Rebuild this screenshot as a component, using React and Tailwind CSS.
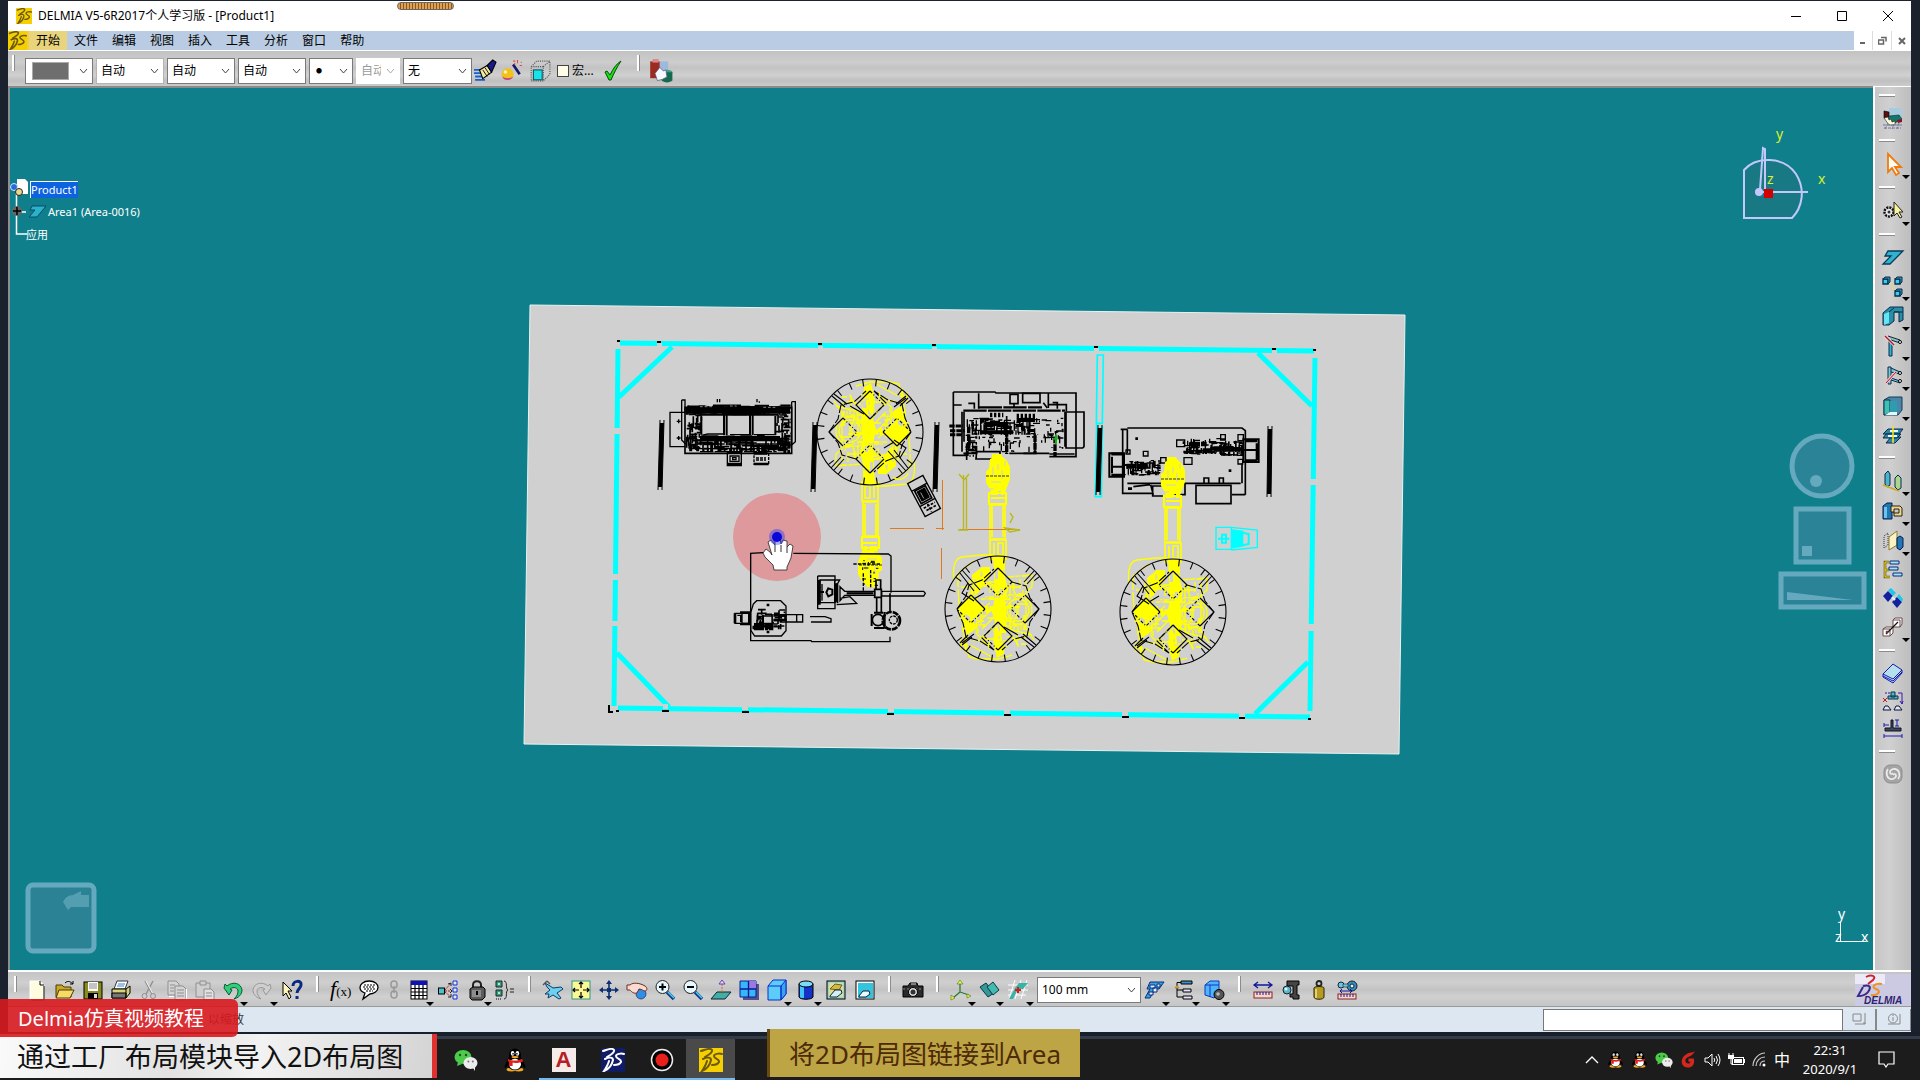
import { useState } from "react";
import clsx from "clsx";

const MENUS = ["开始", "文件", "编辑", "视图", "插入", "工具", "分析", "窗口", "帮助"];

/* ---------- logos ---------- */

function DsMark({ size, bg, ink, width = 2 }) {
    return (
        <svg width={size} height={size} viewBox="0 0 24 24" aria-hidden="true" className="shrink-0">
            <rect width="24" height="24" fill={bg} />
            <g fill="none" stroke={ink} strokeWidth={width} strokeLinecap="round">
                <path d="M2 3C6 2 11-1 13 2c1 3-4 5-7 7" />
                <path d="M4 11c4-2 8-2 8 1c-1 5-4 9-9 11c2-3 4-6 5-10" />
                <path d="M23 6c-3-1-8 0-8 2c0 3 6 3 5 6c-1 2-4 3-7 3" />
            </g>
        </svg>
    );
}

function Penguin({ size }) {
    return (
        <svg width={size} height={size} viewBox="0 0 20 20" aria-hidden="true">
            <ellipse cx="7" cy="18" rx="4" ry="1.6" fill="#f5a623" />
            <ellipse cx="13" cy="18" rx="4" ry="1.6" fill="#f5a623" />
            <path d="M3 13C1 16 2 17 3 15ZM17 13c2 3 1 4 0 2Z" fill="#000" stroke="#000" />
            <ellipse cx="10" cy="12" rx="7" ry="6.5" fill="#000" />
            <ellipse cx="10" cy="6" rx="5" ry="5.5" fill="#000" />
            <ellipse cx="10" cy="13.5" rx="5" ry="4.5" fill="#fff" />
            <ellipse cx="8" cy="4.5" rx="1.5" ry="2" fill="#fff" />
            <ellipse cx="12" cy="4.5" rx="1.5" ry="2" fill="#fff" />
            <circle cx="8.4" cy="4.8" r="0.7" />
            <circle cx="11.6" cy="4.8" r="0.7" />
            <ellipse cx="10" cy="7.6" rx="3" ry="1" fill="#f5a623" />
            <path d="M4 9c4 2 8 2 12 0l1 2c-4 2-9 2-13 0Z" fill="#e02020" />
            <path d="M5 11h3v4H5Z" fill="#e02020" />
        </svg>
    );
}

function WeChat({ size }) {
    return (
        <svg width={size} height={size} viewBox="0 0 24 24" aria-hidden="true">
            <ellipse cx="9" cy="9" rx="8.5" ry="7" fill="#4ccb4a" />
            <path d="M4 14l-1 4l5-2Z" fill="#4ccb4a" />
            <ellipse cx="16.5" cy="15" rx="7" ry="6" fill="#ececec" />
            <path d="M19 20l2 3v-5Z" fill="#ececec" />
            <circle cx="6" cy="7" r="1.2" fill="#1f4d20" />
            <circle cx="12" cy="7" r="1.2" fill="#1f4d20" />
            <circle cx="14.4" cy="13.4" r="1" fill="#777" />
            <circle cx="18.8" cy="13.4" r="1" fill="#777" />
        </svg>
    );
}

/* ---------- toolbar icons, all on a 20 x 20 grid ---------- */

const ICONS = {
    brush: (
        <>
            <path d="M0 9h9M0 12h10M1 15h9M1 18h9" stroke="#1560d0" strokeWidth="1.6" />
            <path d="M5 9l7-4l4 6l-8 6Z" fill="#f3e8a0" stroke="#000" />
            <path d="M8 9l4 6M10 7l4 6" stroke="#000" strokeWidth="0.8" />
            <path d="M12 5l5-5l3 2l-4 9Z" fill="#1a1a90" stroke="#000" />
        </>
    ),
    wand: (
        <>
            <circle cx="6" cy="13" r="5.5" fill="#f2c21a" />
            <path d="M1 15a5.500 5.500 0 0 0 10 0c-3 2-7 2-10 0Z" fill="#c0409a" />
            <circle cx="4" cy="11" r="1.6" fill="#fff6b0" />
            <path d="M11 4l6 9" stroke="#15156a" strokeWidth="2.4" />
            <path d="M11 1h2M15 0v3M18 2h1M17 5h2M12 3l1 1" stroke="#e0483a" />
        </>
    ),
    wirebox: (
        <>
            <path d="M2 6h11v13H2ZM2 6l5-5h12v12l-6 6M13 6l6-5" fill="none" stroke="#555" strokeDasharray="1 1" />
            <rect x="4" y="9" width="8" height="9" fill="#17e3e8" stroke="#156" />
        </>
    ),
    check: <path d="M2 11l2-1l3 4C10 8 13 3 18 0C14 6 11 12 8 19H6Z" fill="#15e015" stroke="#064d06" />,
    catalog: (
        <>
            <path d="M1 2h8v14H1Z" fill="#9c2b20" />
            <path d="M3 0h5v3H3Z" fill="#d88" />
            <path d="M9 2h7v7H9Z" fill="#9fb8dd" />
            <ellipse cx="15" cy="11" rx="4.500" ry="2" fill="#39a08a" />
            <path d="M10.500 11v7c2 2 7 2 9 0v-7Z" fill="#15694f" />
            <path d="M5 12l4-5l3 3l2-1l1 6l-4 2l-4 1Z" fill="#f4f8ff" stroke="#557" strokeWidth="0.6" />
        </>
    ),
    newFile: (
        <>
            <path d="M3 1h10l4 4v15H3Z" fill="#fffde0" stroke="#fff" />
            <path d="M17 6v14H4" fill="none" stroke="#000" />
            <path d="M13 1v4h4" fill="#fff" stroke="#000" />
        </>
    ),
    open: (
        <>
            <path d="M1 5h6l2 2h7v10H1Z" fill="#c9a72c" stroke="#4c3c00" />
            <path d="M4 10h15l-4 8H1Z" fill="#f5dc66" stroke="#4c3c00" />
            <path d="M10 3c3-3 6-1 8 1M18 1v3h-3" fill="none" stroke="#000" />
        </>
    ),
    save: (
        <>
            <rect x="1" y="2" width="18" height="17" fill="#8a8a20" stroke="#000" />
            <rect x="5" y="2" width="10" height="9" fill="#fff" />
            <path d="M6 4h8M6 6h8M6 8h8" stroke="#888" />
            <rect x="5" y="13" width="10" height="6" fill="#000" />
            <rect x="11" y="14" width="3" height="4" fill="#ddd" />
        </>
    ),
    print: (
        <>
            <path d="M6 1h11l-3 8H3Z" fill="#fff" stroke="#334" />
            <path d="M7 4h7M6 6h7" stroke="#38c" />
            <path d="M1 9h14l4-3v7l-4 5H1Z" fill="#d8d27a" stroke="#000" />
            <path d="M1 13h14v5H1ZM15 9v9" fill="#777" stroke="#000" />
        </>
    ),
    cut: (
        <>
            <path d="M6 1l7 13M14 1L7 14" stroke="#8f8f8f" strokeWidth="1.4" />
            <path d="M7 1l7 13" stroke="#f4f4f4" />
            <circle cx="5.500" cy="16" r="2.500" fill="none" stroke="#8f8f8f" />
            <circle cx="14" cy="16" r="2.500" fill="none" stroke="#8f8f8f" />
        </>
    ),
    copy: (
        <g fill="#d4d4d4" stroke="#8f8f8f">
            <path d="M1 1h8l3 3v11H1Z" />
            <path d="M8 6h8l3 3v11H8Z" />
            <path d="M3 5h5M3 8h4M3 11h4M10 10h7M10 13h7M10 16h7" />
            <path d="M19.500 9v11M2 16.500h5" stroke="#fff" />
        </g>
    ),
    paste: (
        <g fill="#cfcfcf" stroke="#8f8f8f">
            <path d="M1 3h14v14H1Z" />
            <path d="M5 1h6v4H5Z" />
            <path d="M9 9h7l3 3v8H9Z" fill="#e0e0e0" />
            <path d="M11 13h6M11 16h6" />
        </g>
    ),
    undo: (
        <path d="M1 8l5 7l3-5l-2-1c4-3 8-1 8 2c0 3-1 5-4 8c7-2 8-7 8-9c-1-7-9-9-15-4L2 4Z" fill="#2fd07a" stroke="#0b5a30" />
    ),
    redo: (
        <path d="M19 8l-5 7l-3-5l2-1c-4-3-8-1-8 2c0 3 1 5 4 8c-7-2-8-7-8-9c1-7 9-9 15-4l2-2Z" fill="#cfcfcf" stroke="#999" />
    ),
    help: (
        <>
            <path d="M1 2l9 9l-4 0l3 6l-2 2l-3-6l-3 3Z" fill="#fbf6b8" stroke="#000" />
            <path d="M11 6c0-6 9-6 8-1c0 3-4 4-4 8M15 16v3" fill="none" stroke="#0a2a80" strokeWidth="3" />
        </>
    ),
    formula: (
        <text x="-1" y="16" fontFamily="Liberation Serif, serif" fontStyle="italic" fontSize="22">
            f<tspan fontSize="13" fontStyle="normal">(x)</tspan>
        </text>
    ),
    comment: (
        <>
            <path d="M10 1c6 0 9 3 9 6.500s-4 6.500-8 6.500l-7 5l2-6C3 12 1 10 1 7.500S4 1 10 1Z" fill="#fff" stroke="#000" strokeWidth="1.3" />
            <path d="M5 5h11M4 7h12M5 9h11M7 11h7" stroke="#000" strokeDasharray="2 1" />
        </>
    ),
    chain: (
        <g fill="none" stroke="#999" strokeWidth="1.500">
            <rect x="7" y="1" width="6" height="7" rx="3" />
            <rect x="7" y="11" width="6" height="7" rx="3" />
            <path d="M10 6v7" />
        </g>
    ),
    table: (
        <>
            <rect x="2" y="1" width="16" height="18" fill="#fff" stroke="#000" />
            <rect x="2" y="1" width="16" height="4" fill="#0c12c0" />
            <path d="M2 8.500h16M2 12h16M2 15.500h16M6 5v14M10 5v14M14 5v14" stroke="#000" strokeWidth="1.2" />
        </>
    ),
    tree: (
        <>
            <rect x="0.500" y="8" width="6" height="6" fill="#4ac0d0" stroke="#000" />
            <path d="M7 10l6-7M7 11h7M7 12l6 5" stroke="#b02020" strokeDasharray="2 1" />
            <path d="M10 4l3-1l0 3M12 9l2 2l-2 2M10 17h3v-3" fill="none" stroke="#222" />
            <path d="M15 1h4v4h-4ZM15 8h4v4h-4ZM15 15h4v4h-4Z" fill="#dfe8ff" stroke="#1430d0" />
        </>
    ),
    lock: (
        <>
            <path d="M6 9V5c0-5 8-5 8 0v4" fill="none" stroke="#222" strokeWidth="2" />
            <path d="M3 9l3-2h10l2 2v8l-3 3H5l-2-2Z" fill="#5c5c5c" stroke="#000" />
            <path d="M5 10h9v7H5Z" fill="#8d8d8d" />
            <path d="M10 11v4" stroke="#000" strokeWidth="2" />
        </>
    ),
    brace: (
        <>
            <path d="M1 1h6v6H1ZM1 10h6v6H1Z" fill="#2aa088" stroke="#222" />
            <path d="M3 3h2v2H3ZM3 12h2v2H3Z" fill="#c8e8a0" />
            <path d="M1 19h6" stroke="#000" strokeDasharray="1 1" />
            <path d="M9 1c4 0 1 8 4 9c-3 1 0 9-4 9M15 9h4M15 12h4" fill="none" stroke="#222" />
        </>
    ),
    fly: (
        <>
            <path d="M2 3l5 3l3 2l8-1l2 2l-6 4l4 5l-2 1l-6-4l-5 3l1-4l-4 0l5-4l-3-3Z" fill="#6cd0f0" stroke="#123a66" />
            <path d="M0 5l4-4M4 1l3 3" stroke="#555" strokeWidth="1.4" />
        </>
    ),
    fit: (
        <>
            <rect x="1" y="1" width="18" height="18" fill="#fbf895" stroke="#2a9a8a" />
            <path d="M10 2v6M10 18v-6M2 10h6M18 10h-6M8 4l2-2l2 2M8 16l2 2l2-2M4 8l-2 2l2 2M16 8l2 2l-2 2" fill="none" stroke="#000" strokeWidth="1.2" />
        </>
    ),
    pan: (
        <>
            <path d="M10 3v14M3 10h14" stroke="#0c2f74" strokeWidth="1.6" />
            <path d="M10 0l3 4H7ZM10 20l3-4H7ZM0 10l4-3v6ZM20 10l-4-3v6Z" fill="#0c2f74" />
            <rect x="8" y="8" width="4" height="4" fill="#0c2f74" />
        </>
    ),
    rotate: (
        <>
            <circle cx="14" cy="14" r="5" fill="#2f8fe6" stroke="#114" strokeWidth="0.600" />
            <path d="M0 5h3c3-3 10-2 15 1c3 2 2 5 0 5s-3-2-6-2l-2 4c-4 1-6-2-7-3H0Z" fill="#f8dcd2" stroke="#702a20" />
        </>
    ),
    zoomIn: (
        <>
            <path d="M12 12l7 7" stroke="#123a8c" strokeWidth="3.500" />
            <path d="M13 12l6 6" stroke="#4ad0ea" strokeWidth="1.500" />
            <circle cx="7.500" cy="7" r="6.500" fill="#e4f8ff" stroke="#222" />
            <path d="M4 7h7M7.500 3.500v7" stroke="#000" strokeWidth="2" />
        </>
    ),
    zoomOut: (
        <>
            <path d="M12 12l7 7" stroke="#123a8c" strokeWidth="3.500" />
            <path d="M13 12l6 6" stroke="#4ad0ea" strokeWidth="1.500" />
            <circle cx="7.500" cy="7" r="6.500" fill="#e4f8ff" stroke="#222" />
            <path d="M4 7h7" stroke="#000" strokeWidth="2" />
        </>
    ),
    normal: (
        <>
            <path d="M6 12h14l-6 7H0Z" fill="#3fb0a8" stroke="#123" />
            <path d="M11 15V4" stroke="#c07a20" strokeDasharray="2 1" />
            <path d="M11 0l3 4H8Z" fill="#e6dcff" stroke="#6a3fb0" />
        </>
    ),
    quad: (
        <>
            <path d="M4 4h16v16H4Z" fill="#56508c" />
            <path d="M1 1h16v16H1Z" fill="#36b8f6" stroke="#0a1a9a" />
            <path d="M10 1h7v8h-7Z" fill="#9a7ae0" />
            <path d="M9.500 1v16M1 9h16" stroke="#0a1a9a" strokeWidth="1.400" />
        </>
    ),
    cube: (
        <>
            <path d="M1 6l5-6h13v14l-5 6H1Z" fill="#5cccfa" stroke="#0a2ad0" />
            <path d="M14 6l5-6v14l-5 6Z" fill="#38a4ea" stroke="#0a2ad0" />
            <path d="M1 6h13v14" fill="none" stroke="#0a2ad0" />
        </>
    ),
    cylinder: (
        <>
            <path d="M3 4v13c1 3 13 3 14 0V4Z" fill="#1431c8" stroke="#000" />
            <path d="M4 5h4v13H5l-1-1Z" fill="#42c3fa" />
            <ellipse cx="10" cy="4" rx="7" ry="3" fill="#7adcfa" stroke="#000" />
        </>
    ),
    hide: (
        <>
            <rect x="1" y="1" width="18" height="18" fill="#8fd8e0" stroke="#000" />
            <path d="M3 3h14v14H3Z" fill="#e7dc80" />
            <path d="M4 9l5-5l7 1l-3 5Z" fill="#d6b93a" stroke="#333" strokeWidth="0.700" />
            <path d="M4 16l5-6h6l1 3l-5 4H4Z" fill="#d2f0f8" stroke="#123" />
        </>
    ),
    swap: (
        <>
            <rect x="1" y="1" width="18" height="18" fill="#fff" stroke="#000" />
            <rect x="3" y="3" width="15" height="15" fill="#35c4e0" />
            <path d="M4 16l4-5h6l1 3l-4 3H4Z" fill="#e8faff" stroke="#123" />
        </>
    ),
    camera: (
        <>
            <path d="M0 6h5l2-3h7l1 3h5v11H0Z" fill="#2b2b2b" stroke="#000" />
            <path d="M0 9h20" stroke="#888" strokeDasharray="2 2" />
            <circle cx="10" cy="12" r="4.500" fill="#ddd" stroke="#000" />
            <circle cx="10" cy="12" r="2.500" fill="#333" />
            <path d="M8 4h5" stroke="#ddd" />
        </>
    ),
    axis: (
        <>
            <path d="M9 12V2M9 12l9 3M9 12l-7 6" stroke="#247a30" strokeWidth="1.200" />
            <path d="M9 0l3 4H6ZM20 16l-4 2v-4ZM0 20v-5l4 3Z" fill="#e6f04a" stroke="#567a10" strokeWidth="0.600" />
        </>
    ),
    planes: (
        <>
            <path d="M1 7l6-4l8 10l-6 4Z" fill="#2f9a98" stroke="#134" />
            <path d="M8 7l6-5l6 8l-6 5Z" fill="#43b9b0" stroke="#134" />
        </>
    ),
    snap: (
        <>
            <path d="M0 5h20M0 10h20M0 15h18M7 0L1 19M13 0L7 19M19 0l-6 19" stroke="#fff" />
            <path d="M11 3h9l-5 6h-5l-5 10H1L7 8Z" fill="#35b5a8" />
            <path d="M7 10h6M10 7v6" stroke="#e01818" strokeWidth="2" />
        </>
    ),
    areaLink: (
        <>
            <path d="M5 2h14l-5 7h-4l-5 9H0l5-9H2Z" fill="#35a5d8" stroke="#0a2a80" />
            <path d="M5 5h5v3H5ZM12 4h3v3h-3ZM4 12h4v3H4ZM8 8h4v4H8Z" fill="#dff4ff" stroke="#0a2a80" />
        </>
    ),
    specTree: (
        <>
            <path d="M7 1h11v3H7Z" fill="#3a90c8" stroke="#000" />
            <path d="M9 9h8v3H9ZM9 16h9v3H9Z" fill="#e4e0ff" stroke="#000" />
            <path d="M7 2.500H3V17h6M3 10h6" fill="none" stroke="#000" />
            <path d="M3 5l2 3H1Z" fill="#f0b030" stroke="#960" strokeWidth="0.500" />
        </>
    ),
    boxGear: (
        <>
            <path d="M1 5l5-4h9v12l-5 5l-9-3Z" fill="#4fb4fa" stroke="#0a3ac0" />
            <path d="M6 5v12M6 5h9M1 5h5" fill="none" stroke="#0a3ac0" />
            <circle cx="15" cy="14.500" r="5" fill="#555" stroke="#000" />
            <circle cx="14" cy="14" r="1.800" fill="#bbb" />
        </>
    ),
    measure: (
        <>
            <path d="M2 5h16M5 2L1 5l4 3M15 2l4 3l-4 3" fill="none" stroke="#14149a" strokeWidth="1.300" />
            <rect x="1" y="12" width="18" height="6" fill="#f6d8c8" stroke="#8a2020" />
            <path d="M4 12v3M7 12v3M10 12v3M13 12v3M16 12v3" stroke="#14149a" />
        </>
    ),
    caliper: (
        <>
            <path d="M6 1h12v4h-2v10h2v4h-6v-2H9v-3h3V6H6Z" fill="#444" stroke="#000" />
            <circle cx="6" cy="10" r="4" fill="#5ab8c8" stroke="#123" />
            <circle cx="5" cy="9" r="1.500" fill="#e4faff" />
        </>
    ),
    weight: (
        <>
            <circle cx="10" cy="3.500" r="2.500" fill="none" stroke="#222" strokeWidth="1.800" />
            <path d="M5 8c0-2 10-2 10 0v9c0 3-10 3-10 0Z" fill="#b59b24" stroke="#2a2200" />
            <path d="M7 9v9" stroke="#f2e48a" strokeWidth="1.500" />
        </>
    ),
    inertia: (
        <>
            <circle cx="4" cy="5" r="3" fill="#6cc8e0" stroke="#123" />
            <circle cx="15" cy="6" r="5" fill="#3a8cb8" stroke="#123" />
            <circle cx="15" cy="6" r="2" fill="#dff" stroke="#123" />
            <path d="M6 4h5v3H6Z" fill="#6cc8e0" stroke="#123" strokeWidth="0.600" />
            <path d="M3 11h12M5 9l-2 2l2 2M13 9l2 2l-2 2" fill="none" stroke="#14149a" />
            <rect x="1" y="14" width="18" height="5" fill="#f6d8c8" stroke="#8a2020" />
            <path d="M4 14v3M7 14v3M10 14v3M13 14v3M16 14v3" stroke="#14149a" />
        </>
    ),
    machine: (
        <>
            <path d="M6 0h13v12H6Z" fill="#a9cbe0" />
            <path d="M1 3l5 1v7l-5-1Z" fill="#5a0f14" stroke="#000" strokeWidth="0.600" />
            <path d="M6 8l10-1l3 4l-7 4l-8-2Z" fill="#16756a" stroke="#033" strokeWidth="0.600" />
            <path d="M1 10l4-1l1 3l2-1l1 3l3-1v4H6Z" fill="#fbf9d8" stroke="#222" strokeWidth="0.600" />
            <path d="M0 17h20M1 20h17M5 15l-3 6M11 16l-2 5M16 15l-2 6" stroke="#70789c" strokeDasharray="3 1" />
            <path d="M14 12l5-1v3l-4 1Z" fill="#8c1420" />
        </>
    ),
    select: <path d="M5 0l13 13h-6l4 6l-3 2l-4-7l-4 4Z" fill="#fffdf4" stroke="#f07a10" strokeWidth="1.800" />,
    gearPick: (
        <>
            <circle cx="6" cy="11" r="4.500" fill="#e9e9e9" stroke="#111" strokeWidth="2.500" strokeDasharray="2 1" />
            <circle cx="6" cy="11" r="1.500" fill="#333" />
            <path d="M11 1l9 10h-4l3 5l-2 1l-3-5l-3 3Z" fill="#f8f49a" stroke="#222" />
        </>
    ),
    area: <path d="M5 4h15L7 17H0l8-8H2Z" fill="#2fb4cc" stroke="#0a3a5c" strokeWidth="1.300" />,
    resources: (
        <>
            <path d="M7 6l6 9M12 6l-3 8" stroke="#e8e060" strokeDasharray="2 1" />
            <path d="M0 3h5v5H0ZM12 3h5v5h-5ZM12 15h5v5h-5Z" fill="#2fd4ec" stroke="#0a2a4c" strokeWidth="1.300" />
            <path d="M0 3l2-2h5v5l-2 2V3ZM12 3l2-2h5v5l-2 2V3ZM12 15l2-2h5v5l-2 2v-5Z" fill="#2898b0" stroke="#0a2a4c" />
        </>
    ),
    wall: (
        <>
            <path d="M0 7l7-6h13v13l-4 2V6h-5v9l-5 4H0Z" fill="#2590a8" stroke="#0a2a4c" />
            <path d="M1 8l5-2v11l-5 2Z" fill="#67e4f4" />
            <path d="M6 6l5-4M11 6h9" stroke="#0a2a4c" />
        </>
    ),
    pillar: (
        <>
            <path d="M6 5v15h3V6Z" fill="#2fb4cc" stroke="#0a2a4c" />
            <path d="M5 0l12 4v3L8 4" fill="#7ac7d0" stroke="#222" />
            <path d="M2 0l9 9" stroke="#f8d8dc" strokeWidth="3" />
            <path d="M2 0l9 9" stroke="#a02030" strokeWidth="1.400" />
            <circle cx="17" cy="6" r="1.500" fill="#fff" stroke="#000" />
        </>
    ),
    pillars: (
        <>
            <path d="M5 1v17h3V1ZM8 2l9 4v2L8 6M8 12l9 3v2l-9-3" fill="#7ac7d0" stroke="#0a2a4c" />
            <path d="M3 17l10-11" stroke="#f4c0c8" strokeWidth="3" />
            <path d="M3 17l10-11" stroke="#a02030" />
            <circle cx="17" cy="7" r="1.500" fill="#fff" stroke="#000" />
            <circle cx="17" cy="15" r="1.500" fill="#fff" stroke="#000" />
        </>
    ),
    glassBox: (
        <>
            <path d="M1 4l5-3h13v13l-4 5H1Z" fill="#4a86a8" stroke="#123a5c" />
            <path d="M1 4h6v13l-6 2Z" fill="#3cc0b8" stroke="#134" />
            <path d="M7 5h7v12H7Z" fill="#2e9cae" />
            <path d="M2 19l5-3h7v3Z" fill="#dffaff" />
        </>
    ),
    layers: (
        <>
            <path d="M5 4h15l-4 5H0ZM8 12h10l-6 6H3Z" fill="#2c88a4" stroke="#0a2a4c" />
            <path d="M3 9h15l-4 4H0Z" fill="#2c88a4" stroke="#0a2a4c" />
            <path d="M5 11h9M7 6h8" stroke="#e8f8ff" strokeWidth="2" />
            <path d="M10 1v17" stroke="#f2e020" strokeWidth="1.600" />
        </>
    ),
    align: (
        <>
            <path d="M2 3l3-3l2 3v11l-3 2l-2-3Z" fill="#4bb4cc" stroke="#0a2a4c" />
            <path d="M12 7l3-3l3 3v10l-3 2l-3-3Z" fill="#a8d890" stroke="#0a2a4c" />
            <path d="M0 14l16 6" stroke="#d0a818" strokeWidth="1.500" />
        </>
    ),
    attach: (
        <>
            <path d="M0 5l4-3h5v16H0Z" fill="#1f78b0" stroke="#0a1a4c" />
            <path d="M1 6h3v11H1Z" fill="#6cc4ea" />
            <path d="M8 5h9l2 2v8h-8v-4H8Z" fill="#f4d680" stroke="#222" />
            <path d="M11 8h5v4h-5Z" fill="#c8c8c8" stroke="#222" />
        </>
    ),
    offset: (
        <>
            <path d="M1 5l4-3v12l-4 3Z" fill="none" stroke="#333" strokeDasharray="1 1" />
            <path d="M6 6l8-6v14l-8 5Z" fill="#fbf2c4" stroke="#8a7a30" />
            <path d="M14 7l3-2l3 2v9l-3 3l-3-2Z" fill="#1f78b8" stroke="#0a1a4c" />
        </>
    ),
    sequence: (
        <>
            <path d="M6 2H2v15h5M2 10h4" fill="none" stroke="#6a5a00" strokeWidth="2.600" />
            <path d="M6 2H2v15h5M2 10h4" fill="none" stroke="#f4e040" />
            <path d="M7 1h9v3H7ZM6 7h9v3H6ZM10 13h9v3h-9Z" fill="#a4e4f4" stroke="#0a2a7c" />
        </>
    ),
    connect: (
        <>
            <path d="M0 8l5-5l5 5l-5 6Z" fill="#12209c" />
            <path d="M5 2l3-2l5 5l-3 3Z" fill="#20c8e8" />
            <path d="M9 14l5-5l5 5l-5 6Z" fill="#12209c" />
            <path d="M14 9l2-3l4 5l-1 3Z" fill="#20c8e8" />
            <path d="M9 9l3 3" stroke="#e8f4ff" strokeWidth="2" />
        </>
    ),
    cubeLink: (
        <g fill="#fff" stroke="#6a4a4a">
            <path d="M0 12h7v7H0ZM0 12l3-2h7v6l-3 3M10 3h7v7h-7ZM10 3l2-2h7v6l-2 3" />
            <path d="M3 17L15 5" stroke="#111" strokeWidth="1.300" />
            <circle cx="4" cy="15" r="1" fill="#111" />
        </g>
    ),
    book: (
        <>
            <path d="M0 11L10 1l9 6v3l-9 10l-10-6Z" fill="#b4e0ee" stroke="#1a1ab0" />
            <path d="M0 11l10 5l9-9M0 13l10 5l9-9" fill="none" stroke="#1a1ab0" />
        </>
    ),
    replace: (
        <>
            <path d="M5 5h10v3H5ZM8 1h4v5H8Z" fill="#4bb4cc" stroke="#134" />
            <path d="M0 19l2-4h3l3 4ZM11 19l2-4h3l3 4Z" fill="#d8e8ff" stroke="#113" />
            <path d="M0 7l4 4M4 7l-4 4" fill="none" stroke="#c01828" />
            <path d="M15 2h4v11M17 10l2 3l1-3" fill="none" stroke="#3a1ab0" />
            <path d="M2 2h5" stroke="#1a1ab0" strokeDasharray="2 1" />
        </>
    ),
    dims: (
        <>
            <path d="M2 9h6V1h2v8h8v3H2Z" fill="#3a4a5a" stroke="#112" />
            <path d="M1 17h18M1 15v4M19 15v4M14 1v6M12 1h4M12 7h4M1 6h5M1 4v4" stroke="#1a1ab0" />
        </>
    ),
    swirl: (
        <g fill="none">
            <rect x="1" y="1" width="18" height="18" rx="6" fill="#a4a4a4" stroke="#8e8e8e" />
            <path d="M10 11c3-3 5 2 0 4C4 16 2 9 5 5M10 9c-3 3-5-2 0-4c6-1 8 6 5 10" stroke="#ececec" strokeWidth="1.600" />
        </g>
    ),
};

function Icon({ name, size = 20 }) {
    return (
        <svg width={size} height={size} viewBox="0 0 20 20" aria-hidden="true" className="shrink-0 overflow-visible">
            {ICONS[name]}
        </svg>
    );
}

function Tri({ className }) {
    return <span className={clsx("absolute border-x-4 border-t-4 border-x-transparent border-t-black", className)}></span>;
}

/* ---------- bottom toolbar ---------- */

const STANDARD = [
    ["newFile", 28], ["open", 28], ["save", 28], ["print", 28], ["cut", 28], ["copy", 28], ["paste", 28],
    ["undo", 28, true], ["redo", 30, true], ["help", 30],
];
const KNOWLEDGE = [
    ["formula", 28], ["comment", 28], ["chain", 22], ["table", 28, true], ["tree", 30], ["lock", 28, true], ["brace", 28],
];
const VIEW = [
    ["fly", 28], ["fit", 28], ["pan", 28], ["rotate", 28], ["zoomIn", 28], ["zoomOut", 28], ["normal", 28], ["quad", 28],
    ["cube", 28, true], ["cylinder", 30, true], ["hide", 30], ["swap", 28],
];
const LAYOUT = [["axis", 28, true], ["planes", 28, true], ["snap", 30, true]];
const LAYOUT_END = [["areaLink", 28, true], ["specTree", 30, true], ["boxGear", 30, true]];
const MEASURE = [["measure", 28], ["caliper", 28], ["weight", 28], ["inertia", 28]];

const WIDTHS = { 22: "w-[22px]", 28: "w-[28px]", 30: "w-[30px]" };

function Group({ items }) {
    return items.map(([name, w, more]) => (
        <button key={name} type="button" aria-label={name} className={clsx("relative flex h-8 shrink-0 items-center justify-center", WIDTHS[w])}>
            <Icon name={name} />
            {more && <Tri className="-right-px bottom-0" />}
        </button>
    ));
}

function Grip() {
    return <span className="mb-3 flex h-4 w-5 shrink-0 justify-center"><i className="h-full w-[3px] border-r border-[#8c8c8c] bg-white"></i></span>;
}

/* ---------- right toolbar ---------- */

const SIDE = [
    [["machine"]],
    [["select", true]],
    [["gearPick", true]],
    [["area"], ["resources", true], ["wall", true], ["pillar", true], ["pillars", true], ["glassBox", true], ["layers"]],
    [["align", true], ["attach", true], ["offset", true], ["sequence"], ["connect"], ["cubeLink", true]],
    [["book"], ["replace"], ["dims"]],
    [["swirl"]],
];

function SideBar() {
    return (
        <aside className="-mt-0.5 flex w-[38px] shrink-0 flex-col border-t border-l-2 border-white bg-[linear-gradient(90deg,#c6c6c6,#d0d0d0_40%,#bdbdbd)]">
            {SIDE.map((group, i) => (
                <div key={i} className="flex flex-col">
                    <span className="flex h-[17px] items-center pl-1"><i className="h-[3px] w-4 border-b border-[#8c8c8c] bg-white"></i></span>
                    {group.map(([name, more]) => (
                        <button key={name} type="button" aria-label={name} className={clsx("relative flex items-center pl-2", more ? "h-[30px]" : "h-[28px]")}>
                            <Icon name={name} />
                            {more && <Tri className="right-px bottom-0" />}
                        </button>
                    ))}
                </div>
            ))}
        </aside>
    );
}

/* ---------- top toolbar ---------- */

function Combo({ label, options, className, children, disabled }) {
    return (
        <label className={clsx("relative flex h-[26px] shrink-0 items-center border border-[#7a7a7a] bg-white", className)}>
            <select aria-label={label} disabled={disabled} className="h-full w-full appearance-none bg-transparent pl-1 text-xs outline-none disabled:text-[#9a9a9a]">
                {options.map(o => <option key={o}>{o}</option>)}
            </select>
            {children}
            <svg width="9" height="6" viewBox="0 0 9 6" className="pointer-events-none absolute right-1" aria-hidden="true">
                <path d="M1 1l3.500 4L8 1" fill="none" stroke={disabled ? "#aaa" : "#444"} />
            </svg>
        </label>
    );
}

function GraphicBar() {
    return (
        <div className="flex h-[38px] shrink-0 items-center border-t border-white bg-[linear-gradient(#c2c2c2,#cdcdcd_30%,#c3c3c3_45%,#d0d0d0_65%,#c0c0c0_80%,#cfcfcf)] pt-0.5 pl-1 shadow-[inset_0_-2px_0_#8a8a8a]">
            <span className="mb-4 flex h-4 w-[13px] shrink-0"><i className="h-full w-[3px] border-r border-[#8c8c8c] bg-white"></i></span>
            <div className="flex items-center gap-[3px]">
                <Combo label="颜色" options={[""]} className="w-[68px]">
                    <span className="pointer-events-none absolute left-1.5 h-[18px] w-[37px] border border-[#aaa] bg-[#6e6e6e]"></span>
                </Combo>
                <Combo label="透明度" options={["自动"]} className="w-[68px] border-[#b4b4b4] bg-[#d2d2d2]" />
                <Combo label="线宽" options={["自动"]} className="w-[68px]" />
                <Combo label="线型" options={["自动"]} className="w-[68px]" />
                <Combo label="点符号" options={["●"]} className="w-[44px] [&_select]:pl-1.5 [&_select]:text-[6px]" />
                <Combo label="渲染" options={["自动"]} disabled className="w-[44px] border-white [&_select]:w-6" />
                <Combo label="层" options={["无"]} className="w-[69px]" />
            </div>
            <button type="button" aria-label="格式刷" className="flex w-[26px] justify-center"><Icon name="brush" size={22} /></button>
            <button type="button" aria-label="向导" className="flex w-[28px] justify-center"><Icon name="wand" size={22} /></button>
            <button type="button" aria-label="显示" className="flex w-[28px] justify-center"><Icon name="wirebox" size={22} /></button>
            <label className="ml-[3px] flex items-center gap-[3px] text-xs">
                <input type="checkbox" className="size-3 appearance-none border border-[#444] bg-[#fffde8]" />
                宏...
            </label>
            <button type="button" aria-label="应用" className="ml-1 flex w-[30px] justify-center"><Icon name="check" /></button>
            <span className="mb-4 flex h-4 w-3 shrink-0 justify-end"><i className="h-full w-[3px] border-r border-[#8c8c8c] bg-white"></i></span>
            <button type="button" aria-label="目录" className="ml-1.5 flex w-[30px] justify-center"><Icon name="catalog" size={24} /></button>
        </div>
    );
}

/* ---------- 2D layout drawing ---------- */

const TICKS = Array.from({ length: 24 }, (_, i) => i * 15 + 7);

// short axis-aligned strokes packed in a box, for the dense parts of imported linework
function hatch(seed, x, y, w, h, count, len) {
    let s = seed;
    const next = () => {
        s = (s * 1103515245 + 12345) % 2147483648;
        return s / 2147483648;
    };
    let d = "";
    for (let i = 0; i < count; i++) {
        const px = Math.round(x + next() * w);
        const py = Math.round(y + next() * h);
        const l = Math.round(len * (0.4 + next()));
        d += next() > 0.5 ? `M${px} ${py}h${Math.min(l, x + w - px)}` : `M${px} ${py}v${Math.min(l, y + h - py)}`;
    }
    return d;
}

const ROBOT_A = hatch(11, -38, -34, 34, 74, 44, 10);
const ROBOT_B = hatch(29, -4, -34, 32, 72, 50, 10);
const ROBOT_C = hatch(47, -32, -40, 58, 80, 46, 6);

function Robot({ transform }) {
    return (
        <g transform={transform} fill="none">
            {/* base and motors */}
            <g fill="#ff0">
                <path d="M-39-2l11-13l14 14l-11 11l3 10l-9 6l-4-14Z" />
                <path d="M-26-34l10-8h8v10l-6 7l-5 8l-7 6l-4-4l5-8Z" />
                <path d="M-5-52h12v20l3 12l-3 14l2 16l-3 35l-7 4l-3-12l1-24l-3-10l3-16Z" />
                <path d="M-14-2h22v6h-20Z" />
            </g>
            <path d="M-3-40h3v10h-3ZM-9-30l4 6l-5 3ZM2-20h3v6H2ZM-11 5l5-3v9ZM-2 16l4-4v11ZM4 24h3v8H4ZM-34 4l6 4v4l-5-2Z" fill="#d0d0d0" />
            <g stroke="#ff0" strokeWidth="1.300">
                <path d="M-44-28c-2-18 2-23 8-24l20-2h12M-40-22v-14l16-12M-36 6l4 38M-40-20l2 30M-33 30l4 18l9 2h20l14-4" />
                <circle cx="20" cy="1" r="11" />
                <circle cx="20" cy="1" r="14" strokeDasharray="12 3" />
                <path d="M8-32l26-2v12l-6 5v36l8 12M12-28v50M16-28v12M22-30v10M28-28v8M10-14h18M10 20l24 6M12 24l8 12M-24 8L-8-6M-20 14L-2-4M-16 20L0 4M-14 28l12-14M-22 24l14 14M-18-2h40M-12-10h24M-26-20L-2-28M-24-30l20 6M-28 36l22 12" />
                <path d={ROBOT_A} />
                <path d={ROBOT_B} />
            </g>
            <path d={ROBOT_C} stroke="#d0d0d0" />
            {/* arm */}
            <g stroke="#ff0" strokeWidth="1.600">
                <path d="M-8-104V-70H7V-104ZM-6-104V-72M5-104V-72" />
                <path d="M-8-69V-50H8V-69ZM-4-66V-52M0-66h5v12H0Z" />
                <path d="M-9-116h17v11H-9ZM-7-111h14M-5-105h10" strokeWidth="2.200" />
            </g>
            <g fill="#ff0">
                <path d="M-8-150l4-2h9l4 4l3 6v12l-3 8l-3 8H3v-4h-3v4H-7l-1-6l-4-6v-12l3-2Z" />
                <path d="M-6-155h9l3 7h-12Z" />
            </g>
            <path d="M-5-142v10M0-145v6M4-139v9M-7-127h10M7-148v5M-8-120h4" stroke="#d0d0d0" />
            <path d="M-12-133h24" stroke="#333" strokeDasharray="3 1" />
            {/* turntable */}
            <g stroke="#000" strokeWidth="1.100">
                <circle r="53" />
                {TICKS.map(a => <path key={a} d="M46 0h7" transform={`rotate(${a})`} />)}
                <path d="M0-41l14 14M-14-27L0-41M-41 0l14-14M27-14l14 14l-14 14M0 41l14-14L0 13M-27-14l14 14" />
                <path d="M14-27L0-13l-14-14M-13 0l-14 14l-14-14M27 14L13 0l14-14M0 41l-14-14L0 13" strokeDasharray="3 2 1 2" />
                <path d="M0 13l-16 16l12 12M14-27l14 4l4 12l9 11M-41 0l6 14l3 14l14 4l14 9M41 0l-9 13l-3 14l-13 3l-12 11M-41 0l9-13l3-11l13-5l12-11" strokeDasharray="9 2" />
                <path d="M-30-26l-6 10l12 8M-36 34l12-9M-24-10l10-6M6 18l14 8" />
                <path d="M36-38L26-27M39-36L29-25M-38-36l14 18M-36-39l18 20M38 36L25 25M36 38L23 28M-36 36l10-8M-38 34l8-8" />
            </g>
        </g>
    );
}

function Blade({ x, y, h, lean = 2 }) {
    return (
        <g stroke="#000" fill="none">
            <path d={`M${x + lean} ${y + 3}L${x} ${y + h - 3}`} strokeWidth="4" />
            <path d={`M${x + lean - 2} ${y}l-${lean} ${h}M${x + lean + 2} ${y}l-${lean} ${h}`} strokeWidth="1" />
        </g>
    );
}

function Frame() {
    return (
        <g>
            <g stroke="#0ff" strokeWidth="5" fill="none">
                <path d="M620 343L1314 351" />
                <path d="M618 349L614 706" />
                <path d="M618 708L1310 717" />
                <path d="M1315 358L1310 711" />
                <path d="M672 347L619 397M617 653L669 707M1258 353l54 53M1308 662L1255 714" strokeWidth="5" />
            </g>
            <g fill="#d0d0d0">
                <path d="M612 428h10v6h-10ZM612 574h10v6h-10ZM610 621h10v5h-10ZM1308 479h10v6h-10ZM1306 624h10v7h-10Z" />
                <path d="M657 343h5v6h-5ZM818 346h5v6h-5ZM932 347h5v6h-5ZM1094 348h5v6h-5ZM1272 350h5v6h-5Z" />
                <path d="M663 704h5v5h-5ZM742 705h6v5h-6ZM888 707h6v5h-6ZM1004 709h6v5h-6ZM1122 711h6v5h-6ZM1239 712h6v5h-6Z" />
            </g>
            <path d="M617 341h3M657 342h4M818 344h4M932 345h4M1094 347h4M1272 349h4M1313 350h3M662 711h7M742 712h7M887 714h7M1004 715h7M1122 717h7M1239 718h6M1308 719h3M609 705v7h4M616 711h3" stroke="#000" strokeWidth="2" fill="none" />
        </g>
    );
}

const FURNACE = [
    hatch(3, 560, 346, 312, 28, 70, 40),
    hatch(5, 560, 436, 312, 48, 130, 36),
    hatch(7, 560, 370, 44, 110, 44, 20),
    hatch(9, 828, 370, 44, 110, 44, 20),
];
const CLAMP = hatch(13, 756, 958, 100, 60, 60, 22);
const GRIPPER = hatch(17, 1085, 800, 50, 90, 14, 10);

/* furnace, gripper and loader; drawn at three times the plan scale */
function LeftCell() {
    return (
        <g transform="translate(500 290) scale(0.333333)" fill="none" stroke="#000" strokeWidth="4">
            <path d="M555 367h-45v103h45M545 330h10v40M545 330v120l12 12M875 335h11v120l-11 10M875 335v130" />
            <path d="M555 352h320v138H555Z" strokeWidth="5" />
            <path d="M562 360h308" strokeWidth="22" />
            <path d="M600 374h235M604 380v54M826 378v58M672 376v60M680 376v60M750 376v60M758 376v60" strokeWidth="6" />
            <path d="M604 436l20-4h50M690 434h60M762 434h62" />
            <path d="M600 446h240" strokeWidth="16" />
            <path d="M590 462h280M570 476h290M600 485h230" strokeDasharray="40 4" />
            {FURNACE.map((d, i) => <path key={i} d={d} strokeWidth="5" />)}
            <path d="M600 350h40M690 348h20M790 352h40" stroke="#d0d0d0" strokeWidth="2" strokeDasharray="8 6" />
            <path d="M565 470h25M850 470h24M850 485h20" strokeWidth="12" strokeDasharray="9 3" />
            <path d="M652 327v10M659 327v10M771 327v10M778 334v4M530 394h12M536 388v12M530 444h12M536 438v12" />
            <path d="M682 485h42v42h-42ZM690 498h27v16h-27ZM698 503h10v6h-10Z" />
            <path d="M682 522h42M762 522h44M682 488h40M762 490h40" strokeWidth="8" />
            <path d="M762 485h44v38h-44ZM768 504h30M768 510h30" strokeDasharray="9 3" />
            {/* table outline */}
            <path d="M752 1052V790l38-2M880 790l285 2l8 6v110M1170 1040v15H935l-2-3H750" />
            {/* clamp unit */}
            <path d="M760 942l10-10h72l16 16v74l-14 16h-80l-12-18v-52Z" />
            <path d="M705 970h45v30h-45ZM712 976h10v20M726 968v34M858 974h50v22h-50ZM890 974v22M930 980h45l18 6v10h-60" />
            <path d="M705 970v30M720 968h30M720 1002h30M748 966v38" strokeWidth="8" />
            <path d={CLAMP} strokeWidth="5" />
            <path d="M762 1010h58" strokeWidth="22" strokeDasharray="30 3 9 3" />
            <path d="M820 976h40M820 990h40" strokeWidth="8" />
            <path d="M790 978h26v22h-26Z" fill="#d0d0d0" />
            <path d="M800 945h8M804 1022v8" strokeWidth="8" />
            {/* gripper */}
            <path d="M953 858h52v20M953 858v98h52v-20M1003 870h16l-6 10v60M960 870h44v68h-44ZM966 882v50" />
            <path d="M958 870v74M1006 880v58" strokeWidth="8" />
            <path d="M958 906h14M985 895l12 4v14l-12 6l-6-12ZM1010 880v55" strokeWidth="6" />
            <path d="M1020 890l14 14h90v12h-90l-14 16ZM1145 904h126l5 6l-5 8h-126ZM1020 925l30-5l20 20l-60 4" />
            <path d="M1124 898h20v24h-20ZM1128 870h14v28h-14ZM1130 922v44M1144 922v44M1170 910v56" strokeWidth="5" />
            <path d="M1040 910h80" strokeWidth="7" />
            <path d="M1060 822h82M1090 850v52M1112 840v56" strokeDasharray="10 4" />
            <path d={GRIPPER} strokeWidth="3" />
            <circle cx="1134" cy="990" r="17" strokeWidth="5" />
            <circle cx="1174" cy="992" r="26" strokeDasharray="18 3" strokeWidth="8" />
            <circle cx="1180" cy="990" r="12" strokeDasharray="8 3" />
            <path d="M1115 972v36M1154 966v50M1122 968h28M1122 1014h30" strokeWidth="6" />
            {/* pendant box */}
            <g transform="translate(1272 618) rotate(-28)">
                <path d="M-26-56H26V56H-26ZM-26-30H26M-26 22H26" />
                <path d="M-18-26H18V16H-18Z" strokeWidth="5" />
                <path d="M-12-20H12V10H-12Z" fill="#000" />
                <path d="M-4-14v20" stroke="#d0d0d0" strokeWidth="2" />
                <path d="M-18 32h38M-14 42h32M-2 26v26" strokeWidth="5" strokeDasharray="8 4" />
            </g>
            <path d="M1180 562c20 14 40 0 45-12" stroke="#ff0" />
        </g>
    );
}

const PRESS = [
    hatch(21, 196, 384, 224, 50, 120, 24),
    hatch(23, 192, 430, 40, 70, 34, 18),
    hatch(25, 420, 384, 70, 90, 34, 16),
    hatch(27, 230, 430, 180, 56, 26, 16),
];
const STATION = [
    hatch(31, 672, 512, 110, 44, 80, 20),
    hatch(33, 848, 446, 130, 46, 90, 20),
    hatch(35, 960, 452, 70, 46, 50, 20),
];

/* press and assembly stations; same scale trick as LeftCell */
function RightCell() {
    return (
        <g transform="translate(900 290) scale(0.333333)" fill="none" stroke="#000" strokeWidth="4">
            <path d="M592 195h18l-3 205h-18ZM590 400l-4 220h18l3-212" stroke="#0ff" strokeWidth="5" />
            <path d="M160 306h125l3 3h240v55M160 306v190h38M236 310v46M445 310v44M160 345h25M447 344h52v20M528 364v136h-80" strokeWidth="5" />
            <path d="M330 313h24v28h-24ZM368 310h52v28h-52ZM342 341v12M205 340h18v16M458 338h14v18M430 338l12 16" strokeWidth="5" />
            <path d="M190 362h305M236 352h190" strokeWidth="7" strokeDasharray="70 4" />
            <path d="M186 365v120M192 365v90M320 378v110M328 490h120M405 430v60M498 366h54v104l-4 4h-50ZM495 366v104" strokeWidth="5" />
            <path d="M148 408h40M150 422h44M150 434h38" strokeWidth="9" strokeDasharray="16 3" />
            <path d="M255 402h70M350 390h55M240 427h100" strokeWidth="12" />
            {PRESS.map((d, i) => <path key={i} d={d} />)}
            <path d="M270 375h40M350 378h55" strokeWidth="14" strokeDasharray="7 5" />
            <path d="M206 410v70M320 420v72M405 436v52M465 440v60" strokeWidth="10" strokeDasharray="20 3" />
            <path d="M230 485h70v22h-72ZM200 460v50M190 490h40M448 492h76M370 490h40" strokeWidth="5" />
            <path d="M468 434v30M460 446h16" stroke="#13b013" strokeWidth="6" strokeDasharray="12 3" />
            {/* assembly station */}
            <path d="M682 414h344l10 8v192M668 420v190h90M682 418v72M1026 520v60M682 580h340M662 418h20M1036 614h-40" strokeWidth="5" />
            <path d="M628 490h44v70h-44ZM636 500v50M636 530h36M1030 448h46v68h-46ZM1070 460v50M1030 480h40" strokeWidth="6" />
            <path d="M634 492h34M634 556h34M1036 452h36M1036 512h36" strokeWidth="9" />
            {STATION.map((d, i) => <path key={i} d={d} />)}
            <path d="M680 528h70M870 462h50M940 478h80" strokeWidth="14" strokeDasharray="30 3" />
            <path d="M850 486h100M930 476h100" strokeWidth="8" strokeDasharray="22 4 7 3" />
            <path d="M830 450h24v20h-24ZM852 503h24v20h-24ZM782 503h16v16h-16ZM962 434h14v16h-14ZM1014 434h16v18h-16ZM730 484h14v14h-14ZM1014 508h14v14h-14ZM678 480h12v12h-12Z" />
            <path d="M706 446h8M986 542h8M684 596h12" strokeWidth="8" />
            <path d="M888 586h105v55H888ZM758 588h68v30h-68ZM752 584l8 30M855 580v34h-20M912 580v-16h14v16M958 580v-16h12v16M700 590l50-6" strokeWidth="5" />
            {/* car */}
            <g stroke="#0ff">
                <path d="M948 712h46v66h-46ZM994 712l78 8v52l-78 8" />
                <path d="M996 720l32 4v44l-32 6Z" fill="#0ff" />
                <path d="M1028 728l18 4v30l-18 4M954 746h34M966 734h12v24h-12Z" strokeWidth="6" />
            </g>
        </g>
    );
}

function Plan() {
    return (
        <svg viewBox="10 88 1863 882" preserveAspectRatio="xMidYMid meet" className="absolute inset-0 h-full w-full" role="img" aria-label="2D layout">
            <path d="M530 305L1405 315L1399 754L524 744Z" fill="#d0d0d0" stroke="#e8f2f2" />
            <Frame />
            <RightCell />
            <Robot transform="translate(870 432) rotate(180)" />
            <Robot transform="translate(998 609)" />
            <Robot transform="translate(1173 612)" />
            <circle cx="777" cy="537" r="44" fill="#dd999b" />
            <LeftCell />
            <Blade x={660} y={420} h={70} />
            <Blade x={813} y={422} h={70} />
            <Blade x={935} y={422} h={70} />
            <Blade x={1098} y={425} h={70} />
            <Blade x={1269} y={426} h={71} lean={1} />
            {/* origin */}
            <g fill="none" stroke="#e07820">
                <path d="M890 528.500h34M936 528.500h8M942.500 480v50M941.500 548v31M960 529.500h60" />
            </g>
            <g fill="none" stroke="#b8b820" strokeWidth="1.400">
                <path d="M963.500 475v55M966.500 478v52M959 474l5 6l5-6M958 530h10M1005 528l15 2l-10 2ZM1010 513l3 4l-3 6" />
            </g>
            {/* pointer */}
            <path d="M763 553l3-4l4 3l2 3l-4-13l3-2l4 5v-6h5l1 5l2-4l4 1v6l3-3l3 2l-2 12l-4 9v3h-13l-1-5l-8-8Z" fill="#fff" stroke="#222" strokeWidth="0.800" />
            <path d="M775 545v7M781 545v7M787 547v6" stroke="#333" />
            <circle cx="777" cy="537" r="8" fill="#2030ff" opacity="0.4" />
            <circle cx="777" cy="537" r="5" fill="#0808d8" />

            {/* compass */}
            <g fill="none" stroke="#c3c8fa" strokeWidth="2">
                <path d="M1744 218v-48c12-14 40-14 52 4c10 16 6 34-4 44Z" fill="#2a6f7c" fillOpacity="0.350" />
                <path d="M1760 190l3-42l2 1v40M1760 192h48" />
            </g>
            <circle cx="1759" cy="192" r="4" fill="#c3c8fa" />
            <rect x="1764" y="189" width="9" height="9" fill="#d40000" />
            <g fill="#d8f032" fontFamily="Noto Sans, sans-serif" fontSize="14">
                <text x="1776" y="139">y</text>
                <text x="1818" y="184">x</text>
                <text x="1767" y="184">z</text>
            </g>
            {/* small axis */}
            <path d="M1840.500 922v19.500h26" fill="none" stroke="#fff" />
            <g fill="#fff" fontFamily="Noto Sans, sans-serif" fontSize="14">
                <text x="1838" y="919">y</text>
                <text x="1835" y="942">z</text>
                <text x="1861" y="942">x</text>
            </g>

            {/* touch controls */}
            <g fill="none" stroke="#65a9be" strokeWidth="5">
                <circle cx="1822" cy="466" r="30" fill="#2b8397" />
                <rect x="1796" y="509" width="53" height="53" fill="#2b8397" />
                <rect x="1781" y="574" width="83" height="33" fill="#2b8397" />
                <rect x="28" y="885" width="66" height="66" rx="5" fill="#2a8294" />
            </g>
            <g fill="#65a9be">
                <circle cx="1816" cy="481" r="6" />
                <rect x="1802" y="546" width="10" height="10" />
                <path d="M1787 592l66 8h-66Z" />
                <path d="M63 902c2-4 5-7 10-7l8-4v4h8v12H75l-4 0l-3 3Z" opacity="0.700" />
            </g>
        </svg>
    );
}

function SpecTree() {
    return (
        <div className="absolute top-[91px] left-0 text-[11px] text-white">
            <svg width="60" height="62" viewBox="0 0 60 62" className="absolute top-0 left-0" aria-hidden="true">
                <path d="M6.500 12v43h11M7 33h9" fill="none" stroke="#fff" strokeWidth="1.500" />
                <path d="M7 0h8l3 3v12H7Z" fill="#fff" />
                <circle cx="4" cy="8" r="3.500" fill="#2a6ad8" stroke="#cfe4ff" />
                <circle cx="9" cy="13" r="3.500" fill="#e8d890" stroke="#222" />
                <circle cx="7" cy="32" r="5" fill="#666" />
                <path d="M3 32h8M7 28v8" stroke="#000" strokeWidth="1.500" />
                <path d="M22 27h14l-9 11h-8l6-7h-5Z" fill="#2cb2c8" stroke="#0a4a6c" />
            </svg>
            <ul className="relative">
                <li className="flex h-5 items-center pl-5">
                    <a href="#product" className="block h-[17px] border-t border-l border-white bg-[#0d62e0] leading-4">Product1</a>
                </li>
                <li className="flex h-[26px] items-center pl-[38px]">Area1 (Area-0016)</li>
                <li className="flex h-5 items-center pl-4">应用</li>
            </ul>
        </div>
    );
}

/* ---------- taskbar ---------- */

function TaskIcon({ label, open, active, children }) {
    return (
        <button
            type="button"
            aria-label={label}
            className={clsx(
                "flex h-full w-[49px] shrink-0 items-center justify-center border-b-2 pt-0.5",
                open ? "border-[#76b9ed]" : "border-transparent",
                active && "bg-[#4a4a4a]"
            )}
        >
            {children}
        </button>
    );
}

function Taskbar() {
    return (
        <footer className="flex h-[41px] shrink-0 items-stretch bg-[#1c1c1c] pl-[441px] text-white">
            <TaskIcon label="微信"><WeChat size={24} /></TaskIcon>
            <TaskIcon label="QQ"><Penguin size={24} /></TaskIcon>
            <TaskIcon label="AutoCAD" open>
                <span className="flex size-6 items-center justify-center bg-[#f6ebe8] font-['Liberation_Sans'] text-[22px] font-bold text-[#b52025]">A</span>
            </TaskIcon>
            <TaskIcon label="3DS" open><DsMark size={24} bg="#101c66" ink="#fff" /></TaskIcon>
            <TaskIcon label="录屏" open>
                <svg width="24" height="24" viewBox="0 0 24 24" aria-hidden="true">
                    <circle cx="12" cy="12" r="10.500" fill="#000" stroke="#eee" strokeWidth="1.500" />
                    <circle cx="12" cy="12" r="6.500" fill="#e8201c" />
                </svg>
            </TaskIcon>
            <TaskIcon label="DELMIA" open active><DsMark size={24} bg="#f5cf00" ink="#6a5a10" /></TaskIcon>

            <div className="ml-auto flex items-center">
                <svg width="14" height="8" viewBox="0 0 14 8" className="mr-2" aria-hidden="true">
                    <path d="M1 7l6-6l6 6" fill="none" stroke="#fff" strokeWidth="1.300" />
                </svg>
                <div className="flex items-center gap-[7px]">
                    <Penguin size={17} />
                    <Penguin size={17} />
                    <WeChat size={18} />
                    <svg width="17" height="17" viewBox="0 0 16 16" aria-hidden="true">
                        <path d="M14 0c-2 2-5 1-8 3C0 6 0 15 7 15.500c5 0 7-3 6-8.500H8v3h2c-1 3-5 2-5-1c0-4 7-3 9-9Z" fill="#d5281c" />
                    </svg>
                    <svg width="17" height="16" viewBox="0 0 17 16" aria-hidden="true">
                        <path d="M1 6h3l4-4v12l-4-4H1Z" fill="none" stroke="#fff" />
                        <path d="M10 6q1.500 2 0 4M12 4q3 4 0 8M14 2q4 6 0 12" fill="none" stroke="#fff" />
                    </svg>
                    <svg width="17" height="14" viewBox="0 0 17 14" aria-hidden="true">
                        <rect x="4.500" y="4.500" width="11" height="7" fill="none" stroke="#fff" />
                        <path d="M6 6h8v4H6ZM16 6h1v4h-1ZM0 2h6v4H0Z" fill="#fff" />
                        <path d="M1 0v2M5 0v2M3 6v5h2" fill="none" stroke="#fff" />
                    </svg>
                    <svg width="15" height="15" viewBox="0 0 15 15" aria-hidden="true">
                        <path d="M1 14C1 7 7 1 13 1M4 14c0-5 4-9 9-9M8 14c0-3 2-5 5-5" fill="none" stroke="#ccc" strokeWidth="1.200" />
                        <circle cx="12" cy="13" r="1.500" fill="#fff" />
                    </svg>
                    <span className="text-[16px] leading-none">中</span>
                </div>
                <time className="flex w-[80px] flex-col items-center text-[13px] leading-[19px]">
                    <span>22:31</span>
                    <span>2020/9/1</span>
                </time>
                <svg width="17" height="17" viewBox="0 0 17 17" className="mr-[25px] ml-2" aria-hidden="true">
                    <path d="M1 1h15v12h-6l-2 3l-2-3H1Z" fill="none" stroke="#fff" strokeWidth="1.200" />
                </svg>
            </div>
        </footer>
    );
}

/* ---------- page ---------- */

export default function App() {
    const [menu, setMenu] = useState("开始");

    return (
        <div className="relative flex h-screen min-h-[640px] flex-col overflow-hidden bg-[#1b222e] pt-px font-['Noto_Sans','Noto_Sans_CJK_SC',sans-serif] text-black">
            <div className="mr-[9px] ml-2 flex min-h-0 flex-1 flex-col bg-[#c8c8c8]">
                <header className="relative flex h-[30px] shrink-0 items-center bg-white pr-[17px] pl-2">
                    <DsMark size={16} bg="#f5cf00" ink="#6a5a10" />
                    <h1 className="ml-1.5 text-xs whitespace-nowrap">DELMIA V5-6R2017个人学习版 - [Product1]</h1>
                    <span className="absolute top-px left-[389px] h-2 w-[57px] rounded-full border border-[#666] bg-[repeating-linear-gradient(90deg,#e0a050_0_2px,#8a5a20_2px_3px)]"></span>
                    <div className="ml-auto flex items-center gap-[35px]">
                        <button type="button" aria-label="最小化"><svg width="11" height="11"><path d="M0 5.500h10" stroke="#000" /></svg></button>
                        <button type="button" aria-label="最大化"><svg width="11" height="11"><path d="M0.500 0.500h9v9h-9Z" fill="none" stroke="#000" /></svg></button>
                        <button type="button" aria-label="关闭"><svg width="11" height="11"><path d="M0 0l10 10M10 0L0 10" stroke="#000" /></svg></button>
                    </div>
                </header>

                <nav className="flex h-[19px] shrink-0 items-stretch bg-[#b9cce3] text-xs">
                    <span className="flex w-[21px] items-center bg-[#f0d040]"><DsMark size={19} bg="#f5cf00" ink="#6a5a10" /></span>
                    {MENUS.map(m => (
                        <button key={m} type="button" onClick={() => setMenu(m)} className={clsx("px-[7px]", m === menu && "bg-[#e8d47c]")}>{m}</button>
                    ))}
                    <div className="ml-auto flex items-stretch divide-x divide-[#ddd] bg-white text-[#666]">
                        <button type="button" aria-label="最小化文档" className="flex w-[19px] items-center justify-center"><svg width="8" height="8"><path d="M1 6h5" stroke="#666" strokeWidth="2" /></svg></button>
                        <button type="button" aria-label="还原文档" className="flex w-[19px] items-center justify-center"><svg width="9" height="9"><path d="M0.500 4h5v4h-5ZM3 1.500h5v4" fill="none" stroke="#666" strokeWidth="1.500" /></svg></button>
                        <button type="button" aria-label="关闭文档" className="flex w-[19px] items-center justify-center"><svg width="8" height="8"><path d="M1 1l6 6M7 1L1 7" stroke="#666" strokeWidth="2" /></svg></button>
                    </div>
                </nav>

                <GraphicBar />

                <div className="flex min-h-0 flex-1">
                    <main className="relative min-w-0 flex-1 border-l-2 border-[#8a9090] bg-[#0f7f8b]">
                        <Plan />
                        <SpecTree />
                    </main>
                    <SideBar />
                </div>

                <div className="flex h-[37px] shrink-0 items-center border-t-2 border-white bg-[linear-gradient(#c4c4c4,#cfcfcf_30%,#c3c3c3_50%,#d0d0d0_70%,#c4c4c4)] shadow-[inset_0_-1px_0_#999]">
                    <span className="mb-3 flex h-4 w-[15px] shrink-0 justify-center"><i className="h-full w-[3px] border-r border-[#8c8c8c] bg-white"></i></span>
                    <Group items={STANDARD} />
                    <Grip />
                    <Group items={KNOWLEDGE} />
                    <Grip />
                    <Group items={VIEW} />
                    <Grip />
                    <Group items={[["camera", 28]]} />
                    <Grip />
                    <Group items={LAYOUT} />
                    <Combo label="网格" options={["100 mm"]} className="ml-1 w-[104px]" />
                    <Group items={LAYOUT_END} />
                    <Grip />
                    <Group items={MEASURE} />
                    <svg width="56" height="32" viewBox="0 0 56 32" className="ml-auto" role="img" aria-label="DELMIA">
                        <rect width="56" height="32" fill="#ccc9e2" />
                        <rect width="30" height="10" fill="#eceaf6" />
                        <g fill="none" strokeWidth="2">
                            <path d="M11 3c5-3 11-1 7 3l-5 4" stroke="#d0202c" />
                            <path d="M8 12c8-2 8 2 5 6c-3 4-7 4-10 4l5-9" stroke="#3a2a80" />
                            <path d="M27 10c-8-1-11 3-6 5c6 2 2 7-5 6" stroke="#f09020" />
                        </g>
                        <text x="9" y="30" fontFamily="Liberation Sans, sans-serif" fontSize="10" fontWeight="bold" fontStyle="italic" fill="#2e2370">DELMIA</text>
                    </svg>
                </div>

                <div className="flex h-[25px] shrink-0 items-center bg-[#dde7f2] text-xs">
                    <p className="pl-[200px] text-[#333]">以缩放</p>
                    <input type="text" aria-label="命令" className="ml-auto h-[22px] w-[300px] border border-[#777] bg-white px-1 outline-none" />
                    <button type="button" aria-label="窗口" className="flex h-[22px] w-[34px] items-center justify-center border-r-2 border-b border-[#888]">
                        <svg width="14" height="12"><path d="M1 1h8v7H1ZM11 10h2v1M13 0v11H3" fill="none" stroke="#888" /></svg>
                    </button>
                    <button type="button" aria-label="信息" className="flex h-[22px] w-[34px] items-center justify-center border-r border-b border-[#888]">
                        <svg width="15" height="12"><circle cx="7" cy="5.500" r="4.500" fill="none" stroke="#888" /><path d="M7 4v4M7 2v1M14 1v10H2" fill="none" stroke="#888" /></svg>
                    </button>
                </div>
            </div>

            <div className="h-[7px] shrink-0 border-b-[3px] border-[#343c4a] bg-[#17202b]"></div>
            <Taskbar />

            {/* video captions */}
            <p className="absolute bottom-0.5 left-0 flex h-11 w-[437px] items-center border-r-[5px] border-[#e03030] bg-[linear-gradient(100deg,#fafafa,#e2e2e2_40%,#f2f2f2_60%,#d4d4d4)] pt-0.5 pl-[17px] text-[27px] whitespace-nowrap text-[#111]">
                通过工厂布局模块导入2D布局图
            </p>
            <p className="absolute bottom-[43px] left-0 flex h-[38px] w-[238px] items-center rounded-r-md bg-[#d81a1f]/90 pt-0.5 pl-[18px] text-[20px] whitespace-nowrap text-white">
                Delmia仿真视频教程
            </p>
            <p className="absolute bottom-[3px] left-[767px] flex h-12 w-[313px] items-center justify-center border-l-[3px] border-[#6a4a10] bg-[#bda444] pt-0.5 text-[26px] whitespace-nowrap text-[#4d2a08]">
                将2D布局图链接到Area
            </p>
        </div>
    );
}
